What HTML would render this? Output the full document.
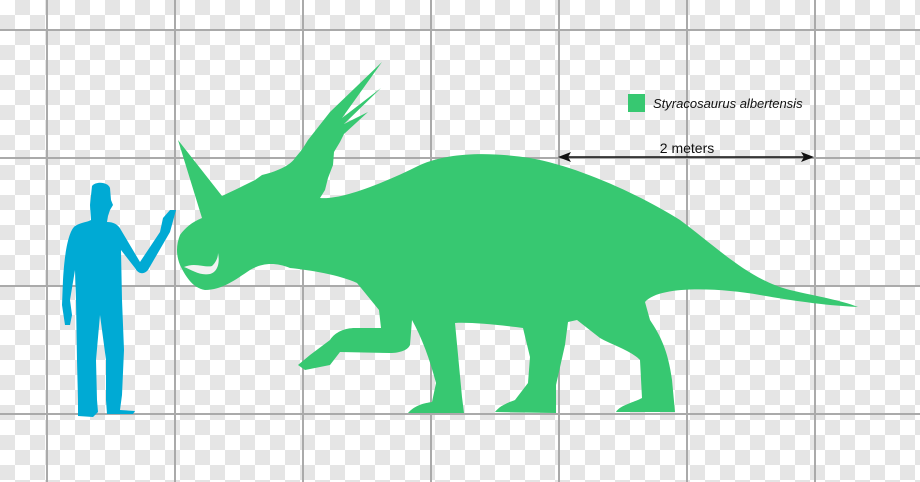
<!DOCTYPE html>
<html><head><meta charset="utf-8"><style>
html,body{margin:0;padding:0;width:920px;height:482px;overflow:hidden}
body{background-color:#fff;background-image:linear-gradient(45deg,#e5e5e5 25%,transparent 25%,transparent 75%,#e5e5e5 75%),linear-gradient(45deg,#e5e5e5 25%,transparent 25%,transparent 75%,#e5e5e5 75%);background-size:30px 30px;background-position:0 0,15px 15px}
</style></head><body>
<svg width="920" height="482" style="position:absolute;left:0;top:0">
<g stroke="#aaa" stroke-width="2">
<line x1="47" y1="0" x2="47" y2="482"/><line x1="175" y1="0" x2="175" y2="482"/><line x1="303" y1="0" x2="303" y2="482"/><line x1="431" y1="0" x2="431" y2="482"/><line x1="559" y1="0" x2="559" y2="482"/><line x1="687" y1="0" x2="687" y2="482"/><line x1="815" y1="0" x2="815" y2="482"/>
<line x1="0" y1="30" x2="920" y2="30"/><line x1="0" y1="158" x2="920" y2="158"/><line x1="0" y1="286" x2="920" y2="286"/><line x1="0" y1="414" x2="920" y2="414"/>
</g>
<path fill="#37c871" d="M178,140 L222,196 C235,190 245,185 255,180 L262,175 C275,172 290,166 295,158 L300,152 L303,148 L308,140 L330,112 L382,62 L342,118 L381,88 L344,124 L368,112 L344,134 L340,142 L334,152 L333,165 L328,178 L325,190 L320,198 C340,200 380,185 420,165 C450,152 490,152 530,158 C580,167 640,195 680,220 C720,250 750,280 790,290 C820,297 840,300 858,307 C820,305 790,300 760,295 C720,288 660,285 645,302 L650,320 C660,335 668,350 672,380 L675,412 L616,412 C620,405 635,402 642,398 L640,360 C630,350 612,345 600,338 L577,320 L568,322 L565,345 L556,385 L556,413 L495,412 C500,405 510,402 515,400 L528,383 L530,357 L523,328 C500,325 470,322 455,323 L462,397 L464,413 L408,413 C415,405 425,403 432,402 L436,383 C430,360 422,338 412,320 L410,345 C408,350 400,353 390,353 L340,352 L330,365 L305,370 L298,365 L310,355 L330,340 C335,332 345,328 355,328 L381,328 L379,310 L357,283 C340,275 310,270 290,268 C275,262 262,263 250,270 C235,280 222,290 205,290 C192,288 185,275 180,265 C176,255 176,245 180,235 C185,228 192,222 202,218 Z"/>
<path fill="#f2f2f2" d="M184,267 C195,262 205,268 212,266 C216,262 218,258 218,253 C220,262 218,272 210,274 C200,276 192,270 184,267 Z"/>
<path fill="#00aad4" d="M92,186 C96,181 108,182 110,188 L111,200 L113,205 L110,210 L108,216 L107,222 C113,222 118,224 121,230 L140,262 L160,232 L163,218 L170,210 L176,210 L170,232 L148,270 C144,275 138,274 135,268 L121,250 L122,300 L124,350 L122,395 L120,410 L135,411 L133,414 L107,414 L106,400 L106,360 L100,315 L96,360 L97,400 L98,412 L93,417 L78,416 L78,400 L77,360 L76,300 L75,270 L70,300 L72,315 L70,325 L65,325 L62,305 L63,280 C65,245 70,230 75,226 C82,222 88,222 91,220 L90,205 Z"/>
<rect x="628" y="94" width="17" height="18" fill="#37c871"/>
<text x="653" y="108" font-family="Liberation Sans, sans-serif" font-style="italic" font-size="13" fill="#111">Styracosaurus albertensis</text>
<text x="687" y="153" text-anchor="middle" font-family="Liberation Sans, sans-serif" font-size="14" fill="#111">2 meters</text>
<line x1="566" y1="157" x2="806" y2="157" stroke="#111" stroke-width="1.5"/>
<path d="M558,157 L571,152 L568,157 L571,162 Z M814,157 L801,152 L804,157 L801,162 Z" fill="#111"/>
</svg>
</body></html>
